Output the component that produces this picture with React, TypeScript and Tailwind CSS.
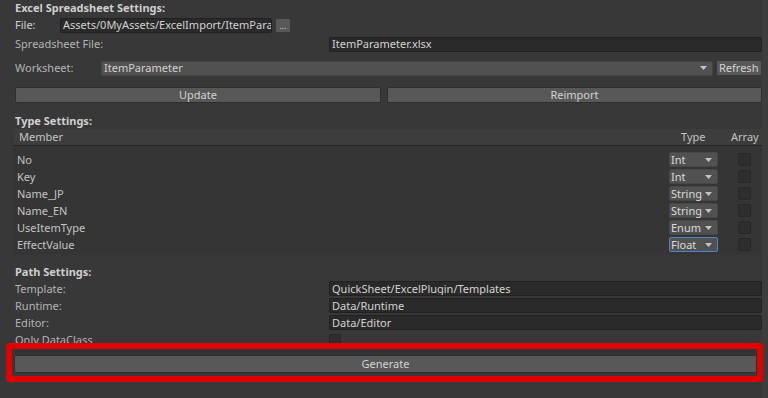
import React from "react";

const font = { fontFamily: '"Noto Sans", "DejaVu Sans", sans-serif' };

function Field({ children, className = "" }: { children?: React.ReactNode; className?: string }) {
  return (
    <div className={`h-[15px] bg-[#2a2a2a] border border-[#212121] rounded-[2px] flex items-center pl-[2px] text-[#d2d2d2] overflow-hidden whitespace-nowrap ${className}`}>
      {children}
    </div>
  );
}

function Btn({ children, className = "" }: { children?: React.ReactNode; className?: string }) {
  return (
    <div className={`h-[16px] bg-[#585858] border border-[#2e2e2e] rounded-[2px] flex items-center justify-center text-[#d2d2d2] ${className}`}>
      {children}
    </div>
  );
}

function Arrow() {
  return (
    <svg width="7" height="4" viewBox="0 0 7 4" className="shrink-0">
      <path d="M0 0 L7 0 L3.5 4 Z" fill="#c4c4c4" />
    </svg>
  );
}

function TypeSelect({ label, focused }: { label: string; focused?: boolean }) {
  return (
    <div
      className={`w-[49px] h-[15px] bg-[#515151] rounded-[2px] flex items-center justify-between pl-[1px] pr-[5px] text-[#dadada] ${
        focused ? "border border-[#4a86cf]" : "border border-[#474747]"
      }`}
    >
      <span>{label}</span>
      <Arrow />
    </div>
  );
}

const rows: [string, string][] = [
  ["No", "Int"],
  ["Key", "Int"],
  ["Name_JP", "String"],
  ["Name_EN", "String"],
  ["UseItemType", "Enum"],
  ["EffectValue", "Float"],
];

export default function App() {
  return (
    <div className="w-[768px] h-[398px] bg-[#383838] relative overflow-hidden flex text-[11px] leading-[14px]" style={font}>
      <div className="w-[762px] flex flex-col pl-[15px]">
        <div className="h-[16px] flex items-center font-bold text-[#cfcfcf]">Excel Spreadsheet Settings:</div>
        <div className="h-[16px] mt-[1px] flex items-center">
          <div className="w-[45px] text-[#cfcfcf]">File:</div>
          <Field className="w-[212px]">Assets/0MyAssets/ExcelImport/ItemParar</Field>
          <div className="ml-[3px] w-[16px] h-[15px] bg-[#585858] border border-[#3a3a3a] rounded-[2px] flex items-end justify-center text-[#cfcfcf] text-[9px] leading-[10px] pb-[1px]">...</div>
        </div>
        <div className="h-[16px] mt-[3px] flex items-center">
          <div className="w-[314px] text-[#b4b4b4]">Spreadsheet File:</div>
          <Field className="flex-1">ItemParameter.xlsx</Field>
        </div>
        <div className="h-[16px] mt-[8px] flex items-center">
          <div className="w-[86px] text-[#b4b4b4]">Worksheet:</div>
          <div className="flex-1 h-[15px] bg-[#515151] border border-[#444] rounded-[2px] flex items-center justify-between pl-[2px] pr-[5px] text-[#d2d2d2]">
            <span>ItemParameter</span>
            <Arrow />
          </div>
          <div className="ml-[3px] w-[46px] h-[16px] bg-[#585858] border border-[#3a3a3a] rounded-[2px] flex items-center pl-[2px] text-[#d2d2d2] overflow-hidden whitespace-nowrap">Refresh</div>
        </div>
        <div className="mt-[11px] flex gap-[6px]">
          <Btn className="w-[366px]">Update</Btn>
          <Btn className="flex-1">Reimport</Btn>
        </div>

        <div className="h-[16px] mt-[10px] flex items-center font-bold text-[#cfcfcf]">Type Settings:</div>
        <div className="-ml-[1px] h-[17px] bg-[#3d3d3d] border-b border-[#232323] flex items-center pl-[5px] text-[#c4c4c4]">
          <div className="flex-1">Member</div>
          <div className="w-[50px]">Type</div>
          <div className="w-[31px]">Array</div>
        </div>
        <div className="-ml-[1px] bg-[#353535] pt-[5px] pb-[2px]">
          {rows.map(([name, type]) => (
            <div key={name} className="h-[17px] flex items-center pl-[3px] text-[#c4c4c4]">
              <div className="flex-1">{name}</div>
              <TypeSelect label={type} focused={type === "Float"} />
              <div className="w-[13px] h-[13px] ml-[20px] mr-[11px] bg-[#2e2e2e] border border-[#282828] rounded-[2px]" />
            </div>
          ))}
        </div>

        <div className="h-[16px] mt-[9px] flex items-center font-bold text-[#cfcfcf]">Path Settings:</div>
        {[
          ["Template:", "QuickSheet/ExcelPlugin/Templates"],
          ["Runtime:", "Data/Runtime"],
          ["Editor:", "Data/Editor"],
        ].map(([l, v]) => (
          <div key={l} className="h-[17px] flex items-center">
            <div className="w-[314px] text-[#b4b4b4]">{l}</div>
            <Field className="flex-1">{v}</Field>
          </div>
        ))}
        <div className="h-[17px] flex items-center">
          <div className="w-[314px] text-[#b4b4b4]">Only DataClass</div>
          <div className="w-[12px] h-[12px] bg-[#2e2e2e] border border-[#282828] rounded-[2px]" />
        </div>
        <div className="h-[7px] bg-[#333333]" />
        <div className="-ml-[1px] mr-[5px] h-[18px] bg-[#585858] border border-[#2e2e2e] rounded-[2px] flex items-center justify-center text-[#d2d2d2]">
          Generate
        </div>
      </div>
      <div className="w-[6px] bg-[#3d3d3d]" />
      <div className="absolute left-[6px] top-[343px] w-[757px] h-[39px] border-[6px] border-[#e00000] rounded-[3px] pointer-events-none" />
    </div>
  );
}
